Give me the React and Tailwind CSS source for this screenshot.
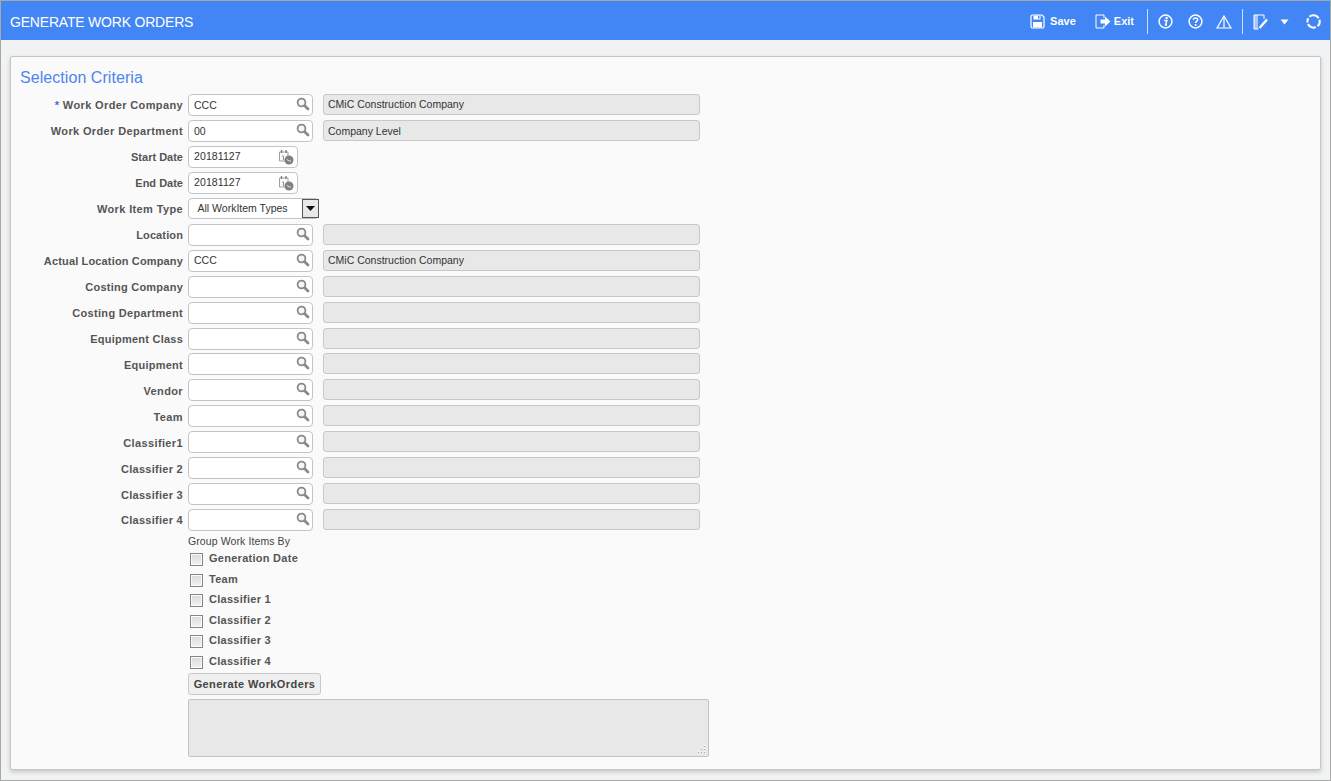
const Search = () => (
  <svg width="14" height="14" viewBox="0 0 14 14" className="absolute right-[2px] top-[2px]">
    <circle cx="5.5" cy="5.5" r="3.9" fill="#f6f6f6" stroke="#8a8a8a" strokeWidth="1.8" />
    <path d="M8.7 8.7L12 12" stroke="#8a8a8a" strokeWidth="2.8" strokeLinecap="round" />
  </svg>
);

const Calendar = () => (
  <svg width="16" height="16" viewBox="0 0 16 16" className="absolute right-[3px] top-[2px]">
    <path d="M1.5 3H10V12H1.5Z" fill="#fafafa" stroke="#a0a0a0" strokeWidth="1" />
    <path d="M3.5 1V4M8 1V4" stroke="#808080" strokeWidth="1.4" />
    <path d="M4 7H5.5V11" stroke="#909090" strokeWidth="1" fill="none" />
    <circle cx="11" cy="11" r="4.5" fill="#808080" />
    <path d="M8.8 10.5L11.5 12H13" stroke="#e6e6e6" strokeWidth="1" fill="none" />
  </svg>
);

const Lov = ({ value, up }) => (
  <div className={`relative w-[125px] h-[22px] bg-white border border-[#c4c4c4] rounded-[4px] pl-[5px] text-[10.5px] text-[#333] ${up ? "leading-[18px]" : "leading-[20px]"}`}>
    {value}
    <Search />
  </div>
);

const DateBox = ({ value }) => (
  <div className="relative w-[110px] h-[22px] bg-white border border-[#c4c4c4] rounded-[4px] pl-[5px] leading-[18px] text-[10.5px] tracking-[0.1px] text-[#333]">
    {value}
    <Calendar />
  </div>
);

const ReadOnly = ({ value, down }) => (
  <div className={`ml-[10px] w-[377px] h-[21px] bg-[#e8e8e8] border border-[#c8c8c8] rounded-[3px] pl-[4px] text-[10.5px] text-[#333] ${down ? "leading-[20px]" : "leading-[18px]"}`}>
    {value}
  </div>
);

const Row = ({ label, required, tight, low, track = "tracking-[0.37px]", children }) => (
  <div className={`flex items-start h-[26px] ${tight ? "-mt-px" : ""}`}>
    <div className={`w-[168px] pr-[5px] text-right font-bold text-[11px] leading-[21px] text-[#555] whitespace-nowrap ${track} ${low ? "pt-[2px]" : "pt-px"}`}>
      {required && <span className="text-[#3f6fc4]">* </span>}
      {label}
    </div>
    {children}
  </div>
);

const LovRow = ({ label, value, desc, required, tight, low, track, up, down }) => (
  <Row label={label} required={required} tight={tight} low={low} track={track}>
    <Lov value={value} up={up} />
    <ReadOnly value={desc} down={down} />
  </Row>
);

const Check = ({ label }) => (
  <div className="flex items-start h-[20.6px]">
    <span className="mt-[2px] ml-[2px] w-[13px] h-[13px] border border-[#858585] bg-[#fbfbfb] p-px">
      <span className="block w-full h-full bg-gradient-to-b from-[#dcdcdc] to-[#f0f0f0]" />
    </span>
    <span className="ml-[6px] font-bold text-[11px] leading-[15px] tracking-[0.27px] text-[#555]">{label}</span>
  </div>
);

const HeadBtn = ({ children, label, gap }) => (
  <div className={`flex items-center text-white font-bold text-[11px] ${gap}`}>
    {children}
    {label && <span>{label}</span>}
  </div>
);

export default function App() {
  return (
    <div className="w-[1331px] h-[781px] bg-[#f1f2f3] border border-[#a8a8a8] flex flex-col overflow-hidden font-['Liberation_Sans',Arial,sans-serif]">
      <header className="h-[39px] shrink-0 bg-[#4285f4] flex items-center justify-between pl-[9px] pr-[9px] pt-[2px]">
        <h1 className="mt-[2px] text-[14px] tracking-[-0.2px] text-white font-normal">GENERATE WORK ORDERS</h1>
        <div className="flex items-center">
          <HeadBtn label="Save" gap="gap-[5px]">
            <svg width="15" height="15" viewBox="0 0 15 15">
              <path d="M1 2.5A1.5 1.5 0 0 1 2.5 1H12L14 3V12.5A1.5 1.5 0 0 1 12.5 14H2.5A1.5 1.5 0 0 1 1 12.5Z" fill="none" stroke="#fff" strokeWidth="1.2" />
              <path d="M3.5 1.5H10.5V5.5H3.5Z" fill="#fff" />
              <path d="M3 8H12V13.5H3Z" fill="#fff" />
              <path d="M8 2H9.5V4.5H8Z" fill="#4285f4" />
            </svg>
          </HeadBtn>
          <div className="ml-[19px]">
            <HeadBtn label="Exit" gap="gap-[3px]">
              <svg width="16" height="15" viewBox="0 0 16 15">
                <path d="M9 4V1H1V14H9V11" fill="none" stroke="#fff" strokeWidth="1" />
                <path d="M5.5 5.5H10V2.5L15.5 7.5L10 12.5V9.5H5.5Z" fill="#fff" />
              </svg>
            </HeadBtn>
          </div>
          <div className="ml-[13px] w-px h-[25px] bg-[#cfe0fc]" />
          <svg className="ml-[10px]" width="15" height="15" viewBox="0 0 15 15">
            <circle cx="7.5" cy="7.5" r="6.4" fill="none" stroke="#fff" strokeWidth="1.5" />
            <circle cx="8.6" cy="3.9" r="1.2" fill="#fff" />
            <path d="M6.2 6.4H8.9L7.6 10.9H9" fill="none" stroke="#fff" strokeWidth="1.5" />
          </svg>
          <svg className="ml-[15px]" width="15" height="15" viewBox="0 0 15 15">
            <circle cx="7.5" cy="7.5" r="6.4" fill="none" stroke="#fff" strokeWidth="1.5" />
            <path d="M5.4 5.8C5.4 3.4 9.7 3.4 9.7 5.7C9.7 7.2 7.6 7.2 7.6 9" fill="none" stroke="#fff" strokeWidth="1.5" />
            <circle cx="7.6" cy="11" r="1" fill="#fff" />
          </svg>
          <svg className="ml-[13px]" width="16" height="14" viewBox="0 0 16 14">
            <path d="M8 1L15 13H1Z" fill="none" stroke="#fff" strokeWidth="1.2" />
            <path d="M8 2V12.5" stroke="#fff" strokeWidth="1.2" />
          </svg>
          <div className="ml-[10px] w-px h-[25px] bg-[#cfe0fc]" />
          <svg className="ml-[10px]" width="15" height="16" viewBox="0 0 15 16">
            <path d="M1 1H5V15H1Z" fill="#a9c6f8" />
            <path d="M1 1H11V5M1 1V15H5.5" fill="none" stroke="#fff" strokeWidth="1" />
            <path d="M6.5 14L14 5.5" stroke="#fff" strokeWidth="2.4" />
          </svg>
          <svg className="ml-[12px]" width="9" height="6" viewBox="0 0 9 6">
            <path d="M0.5 0.5H8.5L4.5 5.5Z" fill="#fff" />
          </svg>
          <svg className="ml-[17px]" width="15" height="15" viewBox="0 0 15 15">
            <path d="M3.4 2.8A6 6 0 0 1 12.6 4.2M13.4 5.8A6 6 0 0 1 11.6 12.2M9.8 13.1A6 6 0 0 1 2 10M1.6 8.6A6 6 0 0 1 2.3 4.2" fill="none" stroke="#fff" strokeWidth="2.1" />
          </svg>
        </div>
      </header>

      <main className="mt-[16px] ml-[9px] w-[1311px] h-[714px] bg-[#fafafa] border border-[#c6c6c6] shadow-[0_2px_4px_rgba(0,0,0,0.18)] rounded-[2px] pl-[9px] pt-[11px]">
        <h2 className="text-[16px] leading-[20px] tracking-[0.06px] text-[#4d85f0] font-normal">Selection Criteria</h2>
        <div className="mt-[6px]">
          <LovRow required label="Work Order Company" value="CCC" desc="CMiC Construction Company" />
          <LovRow down label="Work Order Department" value="00" desc="Company Level" />
          <Row label="Start Date" track="tracking-[0px]"><DateBox value="20181127" /></Row>
          <Row label="End Date" track="tracking-[0px]"><DateBox value="20181127" /></Row>
          <Row label="Work Item Type">
            <div className="relative w-[131px] h-[21px] bg-white border border-[#c4c4c4] rounded-[4px] pl-[8.5px] leading-[19px] text-[10.5px] text-[#333]">
              All WorkItem Types
              <div className="absolute -right-px top-0 w-[17px] h-[19px] border border-[#555] bg-[#e8e8e8] flex items-center justify-center">
                <svg width="9" height="5" viewBox="0 0 9 5"><path d="M0 0H9L4.5 5Z" fill="#111" /></svg>
              </div>
            </div>
          </Row>
          <LovRow label="Location" track="tracking-[0.12px]" />
          <LovRow up label="Actual Location Company" value="CCC" desc="CMiC Construction Company" track="tracking-[0.15px]" />
          <LovRow label="Costing Company" track="tracking-[0.24px]" />
          <LovRow label="Costing Department" track="tracking-[0.31px]" />
          <LovRow label="Equipment Class" track="tracking-[0.24px]" />
          <LovRow tight low label="Equipment" track="tracking-[0.25px]" />
          <LovRow low label="Vendor" />
          <LovRow low label="Team" />
          <LovRow low label="Classifier1" />
          <LovRow low label="Classifier 2" track="tracking-[0.28px]" />
          <LovRow low label="Classifier 3" track="tracking-[0.28px]" />
          <LovRow label="Classifier 4" track="tracking-[0.28px]" />
        </div>
        <div className="pl-[168px]">
          <div className="h-[16px] text-[10.5px] leading-[12px] tracking-[0.1px] text-[#444]">Group Work Items By</div>
          <Check label="Generation Date" />
          <Check label="Team" />
          <Check label="Classifier 1" />
          <Check label="Classifier 2" />
          <Check label="Classifier 3" />
          <Check label="Classifier 4" />
          <button className="-mt-[2px] block w-[133px] h-[22px] pt-px bg-[#efefef] border border-[#c8c8c8] rounded-[3px] font-bold text-[11px] tracking-[0.4px] text-[#444]">Generate WorkOrders</button>
          <div className="relative mt-[4px] w-[521px] h-[58px] bg-[#e8e8e8] border border-[#c4c4c4] rounded-[2px]">
            <svg width="10" height="10" viewBox="0 0 10 10" className="absolute right-[2px] bottom-[2px]">
              <path d="M8 1H9V2H8ZM5 4H6V5H5ZM8 4H9V5H8ZM2 7H3V8H2ZM5 7H6V8H5ZM8 7H9V8H8Z" fill="#fff" />
              <path d="M8 2H9V3H8ZM5 5H6V6H5ZM8 5H9V6H8ZM2 8H3V9H2ZM5 8H6V9H5ZM8 8H9V9H8Z" fill="#a8a8a8" />
            </svg>
          </div>
        </div>
      </main>
    </div>
  );
}
